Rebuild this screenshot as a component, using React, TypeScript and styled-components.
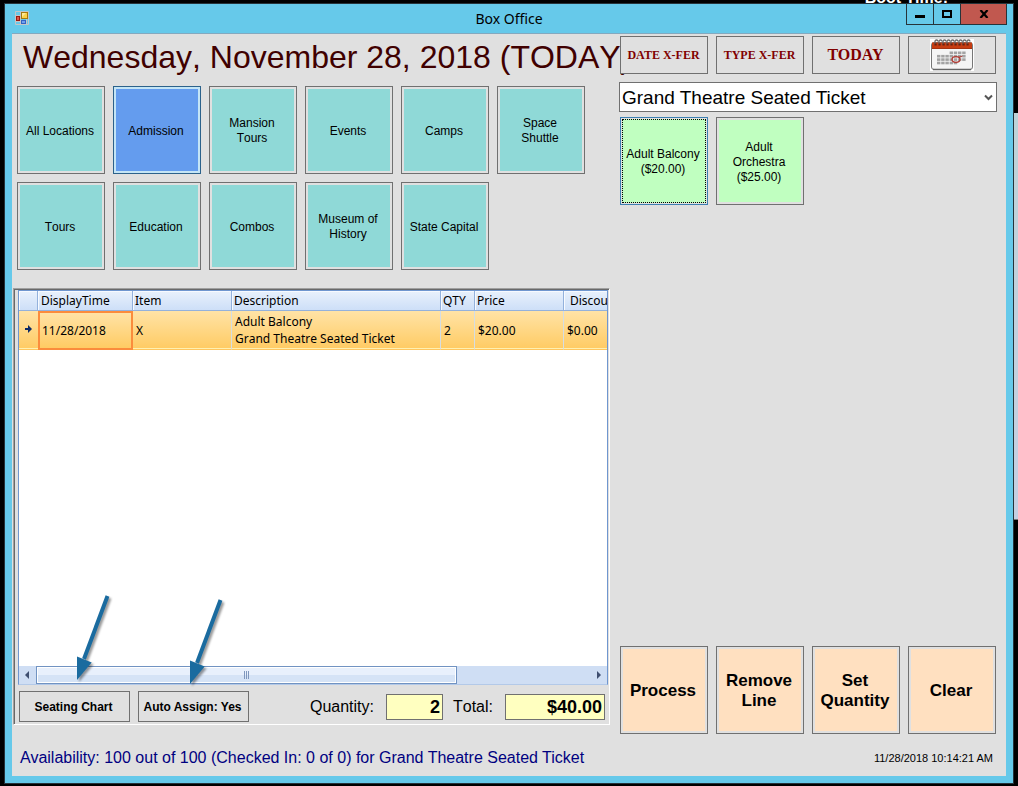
import React from "react";
import styled, { createGlobalStyle, css } from "styled-components";

const face = "#e0e0e0";
const sans = `"Liberation Sans", Arial, sans-serif`;
const ui = `"Noto Sans", "Segoe UI", sans-serif`;
const serif = `"Liberation Serif", "Times New Roman", serif`;

const GlobalStyle = createGlobalStyle`
  *, *::before, *::after { box-sizing: border-box; }
  body { margin: 0; background: #000; font-family: ${sans}; font-kerning: none; color: #000; }
  button, input, select { font: inherit; font-kerning: none; color: inherit; border-radius: 0; }
  button { padding: 0; cursor: pointer; }
`;

const Desktop = styled.div`
  position: relative;
  display: grid;
  min-height: 100vh;
  padding: 3px 4px 2px;
  background: #000;
  overflow: hidden;
`;

const BootLabel = styled.span`
  position: absolute;
  top: -10px;
  right: 70px;
  font: bold 16px/16px ${sans};
  color: #fff;
`;

const BackgroundStrip = styled.div`
  position: absolute;
  top: 113px;
  right: 0;
  width: 20px;
  height: 407px;
  background: linear-gradient(#bdd3d8, #c5cfe2);
  border-bottom: 1px solid #777;
`;

const Window = styled.div`
  position: relative;
  display: flex;
  flex-direction: column;
  min-width: 0;
  padding: 0 7px 7px;
  border: 1px solid #26333a;
  background: #66c9ea;
`;

const TitleBar = styled.header`
  display: grid;
  grid-template-columns: 1fr auto 1fr;
  height: 29px;
  margin: 0 -1px;
`;

const Title = styled.h1`
  margin: 0;
  font: 14px/29px ${ui};
`;

const AppIcon = styled.svg`
  margin: 7px 0 0 4px;
`;

const WindowControls = styled.div`
  display: flex;
  justify-content: flex-end;
  height: 21px;
`;

const WindowButton = styled.button<{ $wide?: boolean }>`
  display: grid;
  place-items: center;
  width: ${(p) => (p.$wide ? 47 : 28)}px;
  border: 1px solid #26333a;
  border-top: 0;
  background: ${(p) => (p.$wide ? "#c1584f" : "transparent")};
  & + & { margin-left: -1px; }
`;

const Client = styled.main`
  flex: 1;
  display: grid;
  grid-template-columns: minmax(0, 1fr) 376px;
  column-gap: 10px;
  padding: 2px 10px 0 1px;
  border-top: 1px solid #84a9bf;
  background: ${face};
`;

const LeftColumn = styled.section`
  display: flex;
  flex-direction: column;
  min-width: 0;
`;

const RightColumn = styled.section`
  position: relative;
  display: flex;
  flex-direction: column;
`;

const DateHeading = styled.h2`
  height: 50px;
  margin: 0;
  padding: 3px 0 0 10px;
  font: 32px/37px ${sans};
  font-kerning: none;
  color: #400000;
  white-space: nowrap;
`;

const Tiles = styled.div`
  display: flex;
  flex-wrap: wrap;
  gap: 8px;
`;

const LocationTiles = styled(Tiles)`
  padding: 0 4px;
  margin-bottom: 18px;
`;

const Tile = styled.button<{ $fill: string; $selected?: boolean; $focused?: boolean; $strong?: boolean }>`
  width: 88px;
  height: 88px;
  padding: 2px 2px 0 0;
  border: 1px solid #707070;
  background: ${(p) => p.$fill};
  box-shadow: inset 0 0 0 2px ${face};
  font: ${(p) => (p.$strong ? `bold 17px/20px ${sans}` : `12px/15px ${sans}`)};
  font-kerning: none;
  white-space: pre-line;
  ${(p) => p.$selected && css`
    border-color: #2c628b;
    box-shadow: inset 0 0 0 2px #c4e5f6;
  `}
  ${(p) => p.$focused && css`
    border-color: #3c7fb1;
    box-shadow: inset 0 0 0 1px ${face};
    outline: 1px dotted #000;
    outline-offset: -3px;
  `}
`;

const OrderPanel = styled.div`
  flex: 1;
  display: flex;
  flex-direction: column;
  min-height: 437px;
  border: 1px solid;
  border-color: #a0a0a0 #fff #fff #a0a0a0;
  box-shadow: inset 1px 1px 0 #696969;
`;

const Grid = styled.div`
  flex: 1;
  display: flex;
  flex-direction: column;
  min-width: 0;
  margin: 1px 1px 0 4px;
  border: 1px solid #6f96cf;
  border-bottom-color: #b3c9e8;
  background: #fff;
`;

const TableClip = styled.div`
  flex: 1;
  overflow: hidden;
`;

const OrderTable = styled.table`
  width: 660px;
  table-layout: fixed;
  border-collapse: separate;
  border-spacing: 0;
  font: 12px/17px ${ui};
  font-kerning: none;
`;

const HeadCell = styled.th<{ $indent?: number }>`
  height: 20px;
  padding: 0 0 0 ${(p) => p.$indent ?? 2}px;
  border-right: 1px solid #93b1dc;
  border-bottom: 1px solid #93b1dc;
  background: linear-gradient(#e9f1fc, #cddff8);
  box-shadow: inset 1px 1px 0 #f7faff;
  font-weight: normal;
  text-align: left;
`;

const Cell = styled.td<{ $current?: boolean }>`
  height: 39px;
  padding: 0 0 0 3px;
  border-right: 1px solid #d5dde2;
  border-bottom: 1px solid #ffc65e;
  background: linear-gradient(#ffe3a6, #ffcb63);
  box-shadow: inset 0 -1px 0 #fff0b0;
  ${(p) => p.$current && css`
    padding-left: 2px;
    border: 2px solid #fb8c3c;
    box-shadow: none;
  `}
`;

const MarkerCell = styled(Cell)`
  padding: 0 0 3px 6px;
  border-right: 0;
`;

const ScrollBar = styled.div`
  display: flex;
  height: 18px;
  background: #cfdef4;
`;

const ScrollArrow = styled.button`
  display: grid;
  place-items: center;
  width: 17px;
  border: 0;
  background: #cfdef4;
`;

const ScrollTrack = styled.div`
  flex: 1;
`;

const ScrollThumb = styled.div`
  display: flex;
  align-items: center;
  justify-content: center;
  width: 76%;
  height: 18px;
  border: 1px solid #7193c2;
  background: linear-gradient(#e8f0fc 50%, #d5e3f6 50%);
  box-shadow: inset 0 0 0 1px #fff;
`;

const OrderFooter = styled.div`
  display: flex;
  align-items: center;
  height: 39px;
  padding: 6px 4px 2px 5px;
  font-size: 16px;
`;

const FooterSlot = styled.div`
  position: relative;
  width: 111px;
  height: 31px;
  margin-right: 8px;
`;

const FooterButton = styled.button`
  width: 100%;
  height: 100%;
  padding: 2px 2px 0 0;
  border: 1px solid #707070;
  background: ${face};
  font: bold 12px/15px ${sans};
  white-space: nowrap;
`;

const Pointer = styled.svg<{ $left: number; $bottom: number }>`
  position: absolute;
  left: ${(p) => p.$left}px;
  bottom: ${(p) => p.$bottom}px;
  pointer-events: none;
  filter: drop-shadow(2px 2px 1px rgba(0, 0, 0, 0.4));
`;

const Figures = styled.div`
  display: flex;
  gap: 10px;
  margin-left: auto;
`;

const Figure = styled.label`
  display: flex;
  align-items: center;
  gap: 12px;
`;

const Amount = styled.input<{ $width: number }>`
  width: ${(p) => p.$width}px;
  height: 26px;
  padding: 2px 2px 0;
  border: 1px solid #707070;
  background: #ffffc0;
  font: bold 18px/22px ${sans};
  text-align: right;
`;

const Availability = styled.p`
  height: 51px;
  margin: 0;
  padding: 23px 0 0 7px;
  font: 16px/20px ${sans};
  color: #000080;
  white-space: nowrap;
`;

const Toolbar = styled.div`
  display: flex;
  gap: 8px;
`;

const ToolButton = styled.button<{ $large?: boolean }>`
  display: grid;
  place-items: center;
  width: 88px;
  height: 38px;
  padding-right: 1px;
  border: 1px solid #707070;
  background: ${face};
  font: bold ${(p) => (p.$large ? 16 : 12)}px/18px ${serif};
  color: #800000;
  white-space: nowrap;
`;

const Picker = styled.div`
  position: relative;
  margin: 8px -1px 5px;
`;

const ItemSelect = styled.select`
  display: block;
  width: 100%;
  height: 30px;
  padding: 2px 2px 0;
  border: 1px solid #707070;
  background: #fff;
  appearance: none;
  font: 19px/24px ${sans};
`;

const Chevron = styled.svg`
  position: absolute;
  top: 12px;
  right: 4px;
  pointer-events: none;
`;

const ActionTiles = styled(Tiles)`
  margin-top: auto;
`;

const Clock = styled.time`
  height: 42px;
  padding: 14px 3px 0 0;
  font: 11px/20px ${sans};
  text-align: right;
`;

const locations = [
  "All Locations", "Admission", "Mansion\nTours", "Events", "Camps", "Space\nShuttle",
  "Tours", "Education", "Combos", "Museum of\nHistory", "State Capital",
];

function CalendarIcon() {
  const days: React.ReactNode[] = [];
  for (let row = 0; row < 4; row++) {
    for (let col = 0; col < 7; col++) {
      const skip = (row === 0 && col < 3) || (row === 3 && col > 4);
      if (!skip) {
        days.push(<rect key={`${row}-${col}`} x={7 + col * 4.2} y={12.500 + row * 3.400} width="3.400" height="2.600" fill="#a3a3a3" />);
      }
    }
  }
  return (
    <svg width="44" height="32" viewBox="0 0 44 32" aria-hidden="true">
      <rect width="44" height="32" fill="#fff" />
      <rect x="1.5" y="3.5" width="41" height="27" rx="2.5" fill="#f5f5f5" stroke="#777" />
      <path d="M3 30.5h38" stroke="#666" strokeWidth="1.6" />
      <path d="M2 3.500h40v6.500H2z" fill="#c63d12" />
      <path d="M2 9.5h40" stroke="#a53210" />
      {[5, 9, 13, 17, 21, 25, 29, 33, 37].map((x) => (
        <g key={x} fill="none">
          <path d={`M${x} 6V2.5q0-1.500 1.500-1.500t1.500 1.500`} stroke="#666" strokeWidth="1.300" />
          <rect x={x - 0.500} y="4.500" width="2.200" height="2" fill="#6d200c" />
        </g>
      ))}
      {days}
      <ellipse cx="26" cy="20.500" rx="4" ry="2.800" fill="none" stroke="#b23a32" strokeWidth="1.300" />
      <path d="M28.500 18.500l4-1.500" stroke="#b23a32" />
    </svg>
  );
}

function FormIcon() {
  return (
    <AppIcon width="14" height="14" viewBox="0 0 14 14" aria-hidden="true">
      <path d="M.5.5h13v13H.5zM5.500.5v13M.5 4.500h5M.5 10.500h5M11.500 8v5" fill="none" stroke="#c3c6c8" />
      <rect x="6.500" y="1.500" width="6" height="6" fill="#fbd148" stroke="#a8780d" />
      <path d="M7 2h4L7 6z" fill="#ffe998" />
      <rect x="1.500" y="5.500" width="3" height="4" fill="#dc5548" stroke="#9c1910" />
      <rect x="6.500" y="9.500" width="4" height="3" fill="#6fa0ee" stroke="#3263c4" />
    </AppIcon>
  );
}

function PointerArrow({ left, bottom }: { left: number; bottom: number }) {
  return (
    <Pointer $left={left} $bottom={bottom} width="48" height="96" viewBox="0 0 48 96" aria-hidden="true">
      <path d="M36.500 2L13 65" stroke="#1a6b9f" strokeWidth="4" />
      <path d="M6 86V62.500L20.700 68.500z" fill="#1a6b9f" />
    </Pointer>
  );
}

export default function App() {
  return (
    <>
      <GlobalStyle />
      <Desktop>
        <BootLabel>Boot Time:</BootLabel>
        <BackgroundStrip />
        <Window>
          <TitleBar>
            <FormIcon />
            <Title>Box Office</Title>
            <WindowControls>
              <WindowButton aria-label="Minimize">
                <svg width="12" height="10"><path d="M1 7.500h10" stroke="#000" strokeWidth="3" /></svg>
              </WindowButton>
              <WindowButton aria-label="Maximize">
                <svg width="10" height="8"><rect x="1" y="1" width="8" height="6" fill="none" stroke="#000" strokeWidth="2" /></svg>
              </WindowButton>
              <WindowButton $wide aria-label="Close">
                <svg width="10" height="8"><path d="M1.500 0L8.500 8M8.500 0L1.500 8" stroke="#000" strokeWidth="2.200" /></svg>
              </WindowButton>
            </WindowControls>
          </TitleBar>
          <Client>
            <LeftColumn>
              <DateHeading>Wednesday, November 28, 2018 (TODAY)</DateHeading>
              <LocationTiles>
                {locations.map((name) => (
                  <Tile key={name} $fill={name === "Admission" ? "#649cee" : "#8fd9d7"} $selected={name === "Admission"}>
                    {name}
                  </Tile>
                ))}
              </LocationTiles>
              <OrderPanel>
                <Grid>
                  <TableClip>
                    <OrderTable>
                      <colgroup>
                        <col style={{ width: 19 }} />
                        <col style={{ width: 95 }} />
                        <col style={{ width: 99 }} />
                        <col style={{ width: 209 }} />
                        <col style={{ width: 34 }} />
                        <col style={{ width: 89 }} />
                        <col />
                      </colgroup>
                      <thead>
                        <tr>
                          <HeadCell aria-label="Current row" />
                          <HeadCell $indent={3}>DisplayTime</HeadCell>
                          <HeadCell>Item</HeadCell>
                          <HeadCell>Description</HeadCell>
                          <HeadCell>QTY</HeadCell>
                          <HeadCell>Price</HeadCell>
                          <HeadCell $indent={6}>Discount</HeadCell>
                        </tr>
                      </thead>
                      <tbody>
                        <tr>
                          <MarkerCell>
                            <svg width="8" height="8" viewBox="0 0 8 8" aria-hidden="true">
                              <path d="M0 3h3V0l4 4-4 4V5H0z" fill="#0c2a66" />
                            </svg>
                          </MarkerCell>
                          <Cell $current>11/28/2018</Cell>
                          <Cell>X</Cell>
                          <Cell>Adult Balcony<br />Grand Theatre Seated Ticket</Cell>
                          <Cell>2</Cell>
                          <Cell>$20.00</Cell>
                          <Cell>$0.00</Cell>
                        </tr>
                      </tbody>
                    </OrderTable>
                  </TableClip>
                  <ScrollBar>
                    <ScrollArrow aria-label="Scroll left">
                      <svg width="5" height="8"><path d="M4 0v8L0 4z" fill="#3f4f70" /></svg>
                    </ScrollArrow>
                    <ScrollTrack>
                      <ScrollThumb>
                        <svg width="6" height="8"><path d="M.5 0v8M2.500 0v8M4.500 0v8" stroke="#7f97bd" /></svg>
                      </ScrollThumb>
                    </ScrollTrack>
                    <ScrollArrow aria-label="Scroll right">
                      <svg width="5" height="8"><path d="M1 0v8l4-4z" fill="#3f4f70" /></svg>
                    </ScrollArrow>
                  </ScrollBar>
                </Grid>
                <OrderFooter>
                  <FooterSlot>
                    <FooterButton>Seating Chart</FooterButton>
                    <PointerArrow left={52} bottom={32} />
                  </FooterSlot>
                  <FooterSlot>
                    <FooterButton>Auto Assign: Yes</FooterButton>
                    <PointerArrow left={46} bottom={28} />
                  </FooterSlot>
                  <Figures>
                    <Figure>Quantity:<Amount $width={57} readOnly value="2" /></Figure>
                    <Figure>Total:<Amount $width={100} readOnly value="$40.00" /></Figure>
                  </Figures>
                </OrderFooter>
              </OrderPanel>
              <Availability>
                Availability: 100 out of 100 (Checked In: 0 of 0) for Grand Theatre Seated Ticket
              </Availability>
            </LeftColumn>
            <RightColumn>
              <Toolbar>
                <ToolButton>DATE X-FER</ToolButton>
                <ToolButton>TYPE X-FER</ToolButton>
                <ToolButton $large>TODAY</ToolButton>
                <ToolButton aria-label="Calendar"><CalendarIcon /></ToolButton>
              </Toolbar>
              <Picker>
                <ItemSelect aria-label="Item" defaultValue="grand">
                  <option value="grand">Grand Theatre Seated Ticket</option>
                </ItemSelect>
                <Chevron width="9" height="8" viewBox="0 0 9 8" aria-hidden="true">
                  <path d="M1 1.500l3.500 3.500L8 1.500" fill="none" stroke="#555" strokeWidth="2" />
                </Chevron>
              </Picker>
              <Tiles>
                <Tile $fill="#c0ffc0" $focused>{"Adult Balcony\n($20.00)"}</Tile>
                <Tile $fill="#c0ffc0">{"Adult\nOrchestra\n($25.00)"}</Tile>
              </Tiles>
              <ActionTiles>
                <Tile $fill="#ffe0c0" $strong>Process</Tile>
                <Tile $fill="#ffe0c0" $strong>Remove Line</Tile>
                <Tile $fill="#ffe0c0" $strong>Set Quantity</Tile>
                <Tile $fill="#ffe0c0" $strong>Clear</Tile>
              </ActionTiles>
              <Clock dateTime="2018-11-28T10:14:21">11/28/2018 10:14:21 AM</Clock>
            </RightColumn>
          </Client>
        </Window>
      </Desktop>
    </>
  );
}
